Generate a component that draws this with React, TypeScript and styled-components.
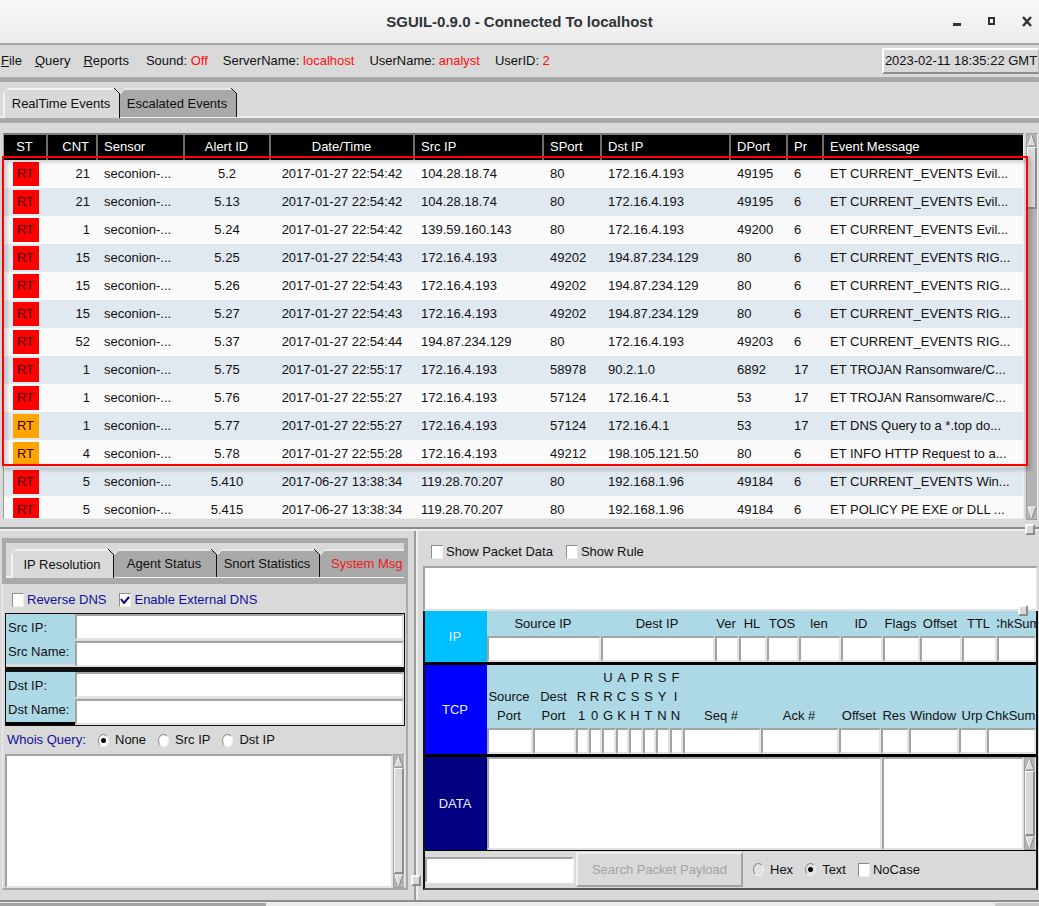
import React from "react";
import styled, { createGlobalStyle, css } from "styled-components";

const face = "#d9d9d9";
const dark = "#a9a9a9";

const sunken = css`
  border: 2px solid;
  border-color: #a3a3a3 #e2e2e2 #e2e2e2 #a3a3a3;
`;
const raised = css`
  border: 2px solid;
  border-color: #fafafa #8c8c8c #8c8c8c #fafafa;
`;

const Global = createGlobalStyle`
  * { box-sizing: border-box; }
  body {
    margin: 0;
    background: ${face};
    color: #111;
    font: 13px/20px "Liberation Sans", Arial, sans-serif;
  }
  button, input, textarea { font: inherit; color: inherit; margin: 0; border-radius: 0; }
`;

const Page = styled.div`
  display: flex;
  flex-direction: column;
  min-height: 100vh;
  overflow: hidden;
`;

/* Window title bar */
const TitleBar = styled.header`
  display: grid;
  grid-template-columns: 1fr auto 1fr;
  align-items: center;
  height: 45px;
  background: linear-gradient(#f7f7f7, #ececec);
  border-bottom: 2px solid #a8a8a8;
`;
const Title = styled.h1`
  grid-column: 2;
  margin: 0;
  font-size: 15px;
  font-weight: bold;
  color: #2e3436;
`;
const WindowButtons = styled.div`
  display: flex;
  justify-content: flex-end;
  gap: 19px;
  padding-right: 4px;
`;
const WindowButton = styled.button`
  width: 16px;
  height: 16px;
  padding: 0;
  border: 0;
  background: none;
  svg { display: block; }
`;

/* Menu */
const MenuBar = styled.nav`
  display: flex;
  align-items: center;
  height: 37px;
  padding-left: 1px;
  border-bottom: 5px solid ${dark};
`;
const MenuItem = styled.button`
  padding: 0;
  margin-right: 13px;
  border: 0;
  background: none;
  &::first-letter { text-decoration: underline; }
`;
const Status = styled.div`
  display: flex;
  flex: 1;
  gap: 15px;
  padding-left: 4px;
`;
const Value = styled.span`
  color: #ff1010;
`;
const Clock = styled.time`
  width: 157px;
  padding: 1px 0;
  border: 2px solid;
  border-color: #fff #b5b5b5 #8c8c8c #fff;
  border-right-width: 1px;
  text-align: center;
  white-space: nowrap;
`;

/* Tabs */
const TabStrip = styled.div<{ $inset?: boolean }>`
  display: flex;
  flex: none;
  height: ${(p) => (p.$inset ? 35 : 36)}px;
  padding: 6px 0 0 ${(p) => (p.$inset ? 5 : 3)}px;
  overflow: hidden;
  background: linear-gradient(#eee, #eee) bottom / 100% 2px no-repeat ${face};
`;
const Tab = styled.button<{ $active?: boolean; $alert?: boolean; $wide?: boolean }>`
  position: relative;
  flex: none;
  width: ${(p) => (p.$wide ? 117 : 103)}px;
  margin-bottom: ${(p) => (p.$active ? 0 : 1)}px;
  padding: 0 2px 0 ${(p) => (p.$alert ? 11 : 0)}px;
  border: 0;
  border-top: 2px solid ${(p) => (p.$active ? "#f2f2f2" : "#e6e6e6")};
  border-left: ${(p) => (p.$active ? "2px solid #f2f2f2" : "0")};
  border-right: 1px solid #111;
  background: ${(p) => (p.$active ? face : dark)};
  color: ${(p) => (p.$alert ? "#f01818" : "inherit")};
  text-align: ${(p) => (p.$alert ? "left" : "center")};
  white-space: nowrap;
  &::before, &::after {
    content: "";
    position: absolute;
    top: -2px;
    width: 6px;
    height: 6px;
  }
  &::before {
    left: ${(p) => (p.$active ? -2 : 0)}px;
    background: linear-gradient(to top left, transparent 44%, #f2f2f2 44% 56%, ${face} 56%);
  }
  &::after {
    right: -1px;
    background: linear-gradient(to top right, transparent 42%, #111 42% 56%, ${face} 56%);
  }
`;

/* Scroll bar */
const Track = styled.div`
  display: flex;
  flex-direction: column;
  flex: none;
  width: 12px;
  background: #b3b3b3;
  border: 1px solid #a0a0a0;
  border-right-color: #eee;
`;
const ArrowButton = styled.button`
  height: 13px;
  padding: 0;
  border: 0;
  background: #b3b3b3;
  svg { display: block; width: 100%; height: 100%; }
`;
const Thumb = styled.div`
  ${raised}
  border-width: 1px 2px 2px 1px;
  background: ${face};
`;
const Trough = styled.div<{ $thumb: string }>`
  flex: 1;
  ${Thumb} { height: ${(p) => p.$thumb}; }
`;
function ScrollBar({ thumb = "100%" }: { thumb?: string }) {
  return (
    <Track>
      <ArrowButton aria-label="Scroll up">
        <svg viewBox="0 0 10 13" preserveAspectRatio="none">
          <path d="M5 1 L1 12 H9 Z" fill={face} />
          <path d="M5 1 L1 12" stroke="#fafafa" fill="none" />
          <path d="M5 1 L9 12 H1" stroke="#868686" fill="none" />
        </svg>
      </ArrowButton>
      <Trough $thumb={thumb}>
        <Thumb />
      </Trough>
      <ArrowButton aria-label="Scroll down">
        <svg viewBox="0 0 10 13" preserveAspectRatio="none">
          <path d="M1 1 H9 L5 12 Z" fill={face} />
          <path d="M9 1 H1 L5 12" stroke="#fafafa" fill="none" />
          <path d="M9 1 L5 12" stroke="#868686" fill="none" />
        </svg>
      </ArrowButton>
    </Track>
  );
}

/* Event table */
const EventPane = styled.section`
  position: relative;
  display: flex;
  flex: none;
  gap: 2px;
  height: 402px;
  padding: 10px 1px 0 3px;
  border-top: 5px solid ${dark};
`;
const EventList = styled.div`
  flex: 1;
  min-width: 0;
  overflow: hidden;
  margin-bottom: 1px;
  border: 1px solid #9a9a9a;
  border-top: 2px solid #7d7d7d;
  border-right-color: #eee;
  border-bottom-color: #eee;
`;
const EventTable = styled.table`
  width: 100%;
  border-collapse: collapse;
  table-layout: fixed;
  white-space: nowrap;
  th {
    height: 25px;
    padding: 0 7px 1px 6px;
    background: #000;
    color: #fff;
    font-weight: normal;
  }
  th + th { border-left: 2px solid #6e6e6e; }
  td { height: 28px; padding: 0 7px; overflow: hidden; }
  tr { background: #fafafa; }
  tbody tr:nth-child(even) { background: #e0e8f0; }
`;
const Cell = styled.td<{ $align: string }>`
  text-align: ${(p) => p.$align};
`;
const HeadCell = styled.th<{ $align: string }>`
  text-align: ${(p) => p.$align};
`;
const Badge = styled.span<{ $level: string }>`
  display: block;
  width: 26px;
  margin: 0 auto;
  line-height: 24px;
  text-align: center;
  background: ${(p) => (p.$level === "high" ? "#f00" : "#ffa500")};
  color: #400000;
`;
const Highlight = styled.div`
  position: absolute;
  top: 33px;
  left: 2px;
  right: 11px;
  height: 310px;
  border: 2px solid #f00;
  filter: drop-shadow(2px 3px 2px rgba(0, 0, 0, 0.4));
  pointer-events: none;
`;

/* Split panes */
const Grip = styled.span`
  ${raised}
  position: absolute;
  width: 10px;
  height: 11px;
  background: ${face};
`;
const RowSash = styled.div`
  position: relative;
  flex: none;
  height: 4px;
  margin-top: 7px;
  border-top: 2px solid #8c8c8c;
  border-bottom: 2px solid #eee;
  ${Grip} { right: 4px; top: -5px; }
`;
const ColumnSash = styled.div`
  position: relative;
  flex: none;
  width: 4px;
  margin: 0 5px;
  border-left: 2px solid #9a9a9a;
  border-right: 2px solid #eee;
  ${Grip} { left: -5px; bottom: 14px; }
`;
const Split = styled.div`
  display: flex;
  flex: 1;
`;

/* Form parts */
const Check = styled.input.attrs({ type: "checkbox" })`
  appearance: none;
  width: 12px;
  height: 14px;
  border: 1px solid #eee;
  border-top-color: #8c8c8c;
  border-left-color: #8c8c8c;
  background: #fff;
  &:checked {
    background: #fff
      url("data:image/svg+xml,%3Csvg xmlns='http://www.w3.org/2000/svg' viewBox='0 0 10 12'%3E%3Cpath d='M1 5 4 9 9 3' fill='none' stroke='%23000080' stroke-width='2'/%3E%3C/svg%3E");
  }
`;
const Radio = styled.input.attrs({ type: "radio" })<{ $flat?: boolean }>`
  appearance: none;
  width: 11px;
  height: 13px;
  margin-right: 3px !important;
  border: 1px solid #f4f4f4;
  border-top-color: #8c8c8c;
  border-left-color: #8c8c8c;
  border-radius: 50% !important;
  background: ${(p) => (p.$flat ? "#e2e2e2" : "#fff")};
  &:checked {
    background: radial-gradient(circle, #000 2px, ${(p) => (p.$flat ? "#e2e2e2" : "#fff")} 3px);
  }
`;
const Option = styled.label<{ $blue?: boolean }>`
  display: flex;
  align-items: center;
  gap: 3px;
  color: ${(p) => (p.$blue ? "#10109a" : "inherit")};
  white-space: nowrap;
`;
const Field = styled.input`
  ${sunken}
  display: block;
  width: 100%;
  min-width: 0;
  height: 26px;
  padding: 0 2px;
  background: #fff;
`;
const Area = styled.textarea`
  ${sunken}
  display: block;
  flex: 1;
  min-width: 0;
  min-height: 0;
  padding: 2px;
  background: #fff;
  resize: none;
`;
const PayloadText = styled(Area)`
  flex: 0 0 142px;
`;
const Row = styled.div`
  display: flex;
  flex: 1;
  min-height: 90px;
`;

/* Left pane */
const LeftPane = styled.section`
  display: flex;
  flex-direction: column;
  width: 409px;
  padding: 7px 1px 10px 2px;
`;
const TabFrame = styled.div`
  border: solid ${dark};
  border-width: 5px 4px 6px;
`;
const Resolution = styled.div`
  display: flex;
  flex: 1;
  flex-direction: column;
  padding: 0 1px 0 2px;
  border-right: 2px solid ${dark};
  border-bottom: 2px solid ${dark};
  border-left: 1px solid #eee;
`;
const DnsOptions = styled.div`
  display: flex;
  align-items: center;
  gap: 13px;
  height: 29px;
  padding: 3px 0 0 7px;
`;
const HostBox = styled.div`
  display: grid;
  grid-template-columns: 69px 1fr;
  border: 1px solid #111;
  & + & { border-top-width: 4px; }
`;
const HostLabels = styled.div<{ $edge: string }>`
  display: flex;
  flex-direction: column;
  padding-top: 2px;
  border-bottom: 3px solid ${(p) => p.$edge};
  background: lightblue;
  label { padding: 2px; line-height: 20px; }
`;
const HostFields = styled.div`
  display: grid;
  gap: 1px;
`;
const WhoisOptions = styled.div`
  display: flex;
  align-items: center;
  gap: 12px;
  height: 28px;
  padding: 0 2px;
`;
const WhoisTitle = styled.span`
  width: 79px;
  color: #10109a;
`;

/* Right pane */
const RightPane = styled.section`
  display: flex;
  flex: 1;
  flex-direction: column;
  min-width: 0;
  padding: 5px 1px 10px 0;
`;
const PacketOptions = styled.div`
  display: flex;
  gap: 13px;
  padding: 6px 8px 4px;
`;
const RuleBox = styled.div`
  position: relative;
  display: flex;
  height: 45px;
  ${Grip} { right: 10px; bottom: -5px; }
`;
const PacketFrame = styled.div`
  display: flex;
  flex: 1;
  flex-direction: column;
  border: solid #111;
  border-width: 0 2px 2px;
  border-bottom-color: #555;
`;
const Layer = styled.div<{ $grow?: boolean }>`
  display: grid;
  grid-template-columns: 62px 1fr;
  flex: ${(p) => (p.$grow ? 1 : "none")};
  border-bottom: ${(p) => (p.$grow ? 1 : 3)}px solid #000;
`;
const LayerName = styled.div<{ $color: string }>`
  display: flex;
  align-items: center;
  justify-content: center;
  padding-right: 2px;
  background: ${(p) => p.$color};
  color: #e8eeff;
`;
const Columns = styled.div<{ $cols: string }>`
  display: grid;
  grid-template-columns: ${(p) => p.$cols};
  min-width: 0;
  background: lightblue;
`;
const Column = styled.label<{ $tall?: boolean }>`
  display: flex;
  flex-direction: column;
  min-width: 0;
  height: ${(p) => (p.$tall ? 89 : 51)}px;
`;
const ColumnName = styled.span<{ $tall?: boolean }>`
  display: flex;
  flex: 1;
  flex-direction: column;
  align-items: center;
  justify-content: flex-end;
  overflow: ${(p) => (p.$tall ? "visible" : "hidden")};
  padding: 0 2px 3px 0;
  line-height: 19px;
  white-space: pre;
  text-align: center;
`;
const SearchRow = styled.div`
  display: flex;
  align-items: center;
  height: 37px;
`;
const SearchField = styled(Field)`
  width: 149px;
  margin-right: 2px;
  border-color: #a3a3a3 #fafafa #fafafa #a3a3a3;
`;
const SearchButton = styled.button`
  ${raised}
  border-color: #eee #a3a3a3 #a3a3a3 #eee;
  width: 167px;
  height: 35px;
  margin-right: 10px;
  padding: 0;
  background: ${face};
  color: #a3a3a3 !important;
`;
const SearchOptions = styled.div`
  display: flex;
  gap: 12px;
`;

const BottomScroll = styled.footer`
  display: flex;
  justify-content: space-between;
  height: 6px;
  padding-top: 1px;
  border-top: 2px solid #8c8c8c;
  background: #ececec;
`;
const BottomThumb = styled.div<{ $width: number; $pale?: boolean }>`
  width: ${(p) => p.$width}px;
  background: ${(p) => (p.$pale ? "#c8c8c8" : "#a3a3a3")};
`;

const columns: [string, string, number | undefined][] = [
  ["ST", "center", 43],
  ["CNT", "right", 50],
  ["Sensor", "left", 87],
  ["Alert ID", "center", 86],
  ["Date/Time", "center", 144],
  ["Src IP", "left", 129],
  ["SPort", "left", 58],
  ["Dst IP", "left", 129],
  ["DPort", "left", 57],
  ["Pr", "left", 36],
  ["Event Message", "left", undefined],
];

const S = "seconion-...";
const events: string[][] = [
  ["high", "21", S, "5.2", "2017-01-27 22:54:42", "104.28.18.74", "80", "172.16.4.193", "49195", "6", "ET CURRENT_EVENTS Evil..."],
  ["high", "21", S, "5.13", "2017-01-27 22:54:42", "104.28.18.74", "80", "172.16.4.193", "49195", "6", "ET CURRENT_EVENTS Evil..."],
  ["high", "1", S, "5.24", "2017-01-27 22:54:42", "139.59.160.143", "80", "172.16.4.193", "49200", "6", "ET CURRENT_EVENTS Evil..."],
  ["high", "15", S, "5.25", "2017-01-27 22:54:43", "172.16.4.193", "49202", "194.87.234.129", "80", "6", "ET CURRENT_EVENTS RIG..."],
  ["high", "15", S, "5.26", "2017-01-27 22:54:43", "172.16.4.193", "49202", "194.87.234.129", "80", "6", "ET CURRENT_EVENTS RIG..."],
  ["high", "15", S, "5.27", "2017-01-27 22:54:43", "172.16.4.193", "49202", "194.87.234.129", "80", "6", "ET CURRENT_EVENTS RIG..."],
  ["high", "52", S, "5.37", "2017-01-27 22:54:44", "194.87.234.129", "80", "172.16.4.193", "49203", "6", "ET CURRENT_EVENTS RIG..."],
  ["high", "1", S, "5.75", "2017-01-27 22:55:17", "172.16.4.193", "58978", "90.2.1.0", "6892", "17", "ET TROJAN Ransomware/C..."],
  ["high", "1", S, "5.76", "2017-01-27 22:55:27", "172.16.4.193", "57124", "172.16.4.1", "53", "17", "ET TROJAN Ransomware/C..."],
  ["low", "1", S, "5.77", "2017-01-27 22:55:27", "172.16.4.193", "57124", "172.16.4.1", "53", "17", "ET DNS Query to a *.top do..."],
  ["low", "4", S, "5.78", "2017-01-27 22:55:28", "172.16.4.193", "49212", "198.105.121.50", "80", "6", "ET INFO HTTP Request to a..."],
  ["high", "5", S, "5.410", "2017-06-27 13:38:34", "119.28.70.207", "80", "192.168.1.96", "49184", "6", "ET CURRENT_EVENTS Win..."],
  ["high", "5", S, "5.415", "2017-06-27 13:38:34", "119.28.70.207", "80", "192.168.1.96", "49184", "6", "ET POLICY PE EXE or DLL ..."],
];

const ipFields = ["Source IP", "Dest IP", "Ver", "HL", "TOS", "len", "ID", "Flags", "Offset", "TTL", "ChkSum"];
const ipCols = "114px 114px 24px 28px 32px 42px 42px 37px 42px 35px minmax(0, 1fr)";
const tcpFields = [
  "Source\nPort", "Dest\nPort", "R\n1", "R\n0", "U\nR\nG", "A\nC\nK", "P\nS\nH", "R\nS\nT", "S\nY\nN", "F\nI\nN",
  "Seq #", "Ack #", "Offset", "Res", "Window", "Urp", "ChkSum",
];
const tcpCols = "46px 43px 13px 13px 14px 13px 14px 13px 14px 13px 78px 78px 42px 28px 50px 28px minmax(0, 1fr)";

function Host({ name, edge }: { name: string; edge: string }) {
  const id = name.toLowerCase();
  return (
    <HostBox>
      <HostLabels $edge={edge}>
        <label htmlFor={`${id}-ip`}>{name} IP:</label>
        <label htmlFor={`${id}-name`}>{name} Name:</label>
      </HostLabels>
      <HostFields>
        <Field id={`${id}-ip`} />
        <Field id={`${id}-name`} />
      </HostFields>
    </HostBox>
  );
}

function HeaderFields({ names, cols, tall }: { names: string[]; cols: string; tall?: boolean }) {
  return (
    <Columns $cols={cols}>
      {names.map((n) => (
        <Column key={n} $tall={tall}>
          <ColumnName $tall={tall}>{n}</ColumnName>
          <Field readOnly />
        </Column>
      ))}
    </Columns>
  );
}

export default function App() {
  return (
    <Page>
      <Global />
      <TitleBar>
        <Title>SGUIL-0.9.0 - Connected To localhost</Title>
        <WindowButtons>
          <WindowButton aria-label="Minimize">
            <svg width="16" height="16"><path d="M4 10.500H12" stroke="#2e3436" strokeWidth="3" /></svg>
          </WindowButton>
          <WindowButton aria-label="Maximize">
            <svg width="16" height="16"><rect x="5" y="4" width="5" height="6" fill="none" stroke="#2e3436" strokeWidth="2" /></svg>
          </WindowButton>
          <WindowButton aria-label="Close">
            <svg width="16" height="16"><path d="M4 3L12 12M12 3L4 12" stroke="#2e3436" strokeWidth="2.400" /></svg>
          </WindowButton>
        </WindowButtons>
      </TitleBar>

      <MenuBar>
        <MenuItem>File</MenuItem>
        <MenuItem>Query</MenuItem>
        <MenuItem>Reports</MenuItem>
        <Status>
          <span>Sound: <Value>Off</Value></span>
          <span>ServerName: <Value>localhost</Value></span>
          <span>UserName: <Value>analyst</Value></span>
          <span>UserID: <Value>2</Value></span>
        </Status>
        <Clock>2023-02-11 18:35:22 GMT</Clock>
      </MenuBar>

      <TabStrip>
        <Tab $active $wide>RealTime Events</Tab>
        <Tab $wide>Escalated Events</Tab>
      </TabStrip>

      <EventPane>
        <EventList>
          <EventTable>
            <colgroup>
              {columns.map(([name, , width]) => <col key={name} width={width} />)}
            </colgroup>
            <thead>
              <tr>
                {columns.map(([name, align]) => <HeadCell key={name} $align={align}>{name}</HeadCell>)}
              </tr>
            </thead>
            <tbody>
              {events.map((row) => (
                <tr key={row[3]}>
                  {row.map((value, i) => (
                    <Cell key={i} $align={columns[i][1]}>
                      {i === 0 ? <Badge $level={value}>RT</Badge> : value}
                    </Cell>
                  ))}
                </tr>
              ))}
            </tbody>
          </EventTable>
        </EventList>
        <ScrollBar thumb="62px" />
        <Highlight />
      </EventPane>

      <RowSash><Grip /></RowSash>

      <Split>
        <LeftPane>
          <TabFrame>
            <TabStrip $inset>
              <Tab $active>IP Resolution</Tab>
              <Tab>Agent Status</Tab>
              <Tab>Snort Statistics</Tab>
              <Tab $alert>System Msg</Tab>
            </TabStrip>
          </TabFrame>
          <Resolution>
            <DnsOptions>
              <Option $blue><Check />Reverse DNS</Option>
              <Option $blue><Check defaultChecked />Enable External DNS</Option>
            </DnsOptions>
            <Host name="Src" edge={face} />
            <Host name="Dst" edge="#000" />
            <WhoisOptions role="radiogroup" aria-labelledby="whois-title">
              <WhoisTitle id="whois-title">Whois Query:</WhoisTitle>
              <Option><Radio name="whois" defaultChecked />None</Option>
              <Option><Radio name="whois" />Src IP</Option>
              <Option><Radio name="whois" />Dst IP</Option>
            </WhoisOptions>
            <Row>
              <Area aria-label="Whois result" />
              <ScrollBar />
            </Row>
          </Resolution>
        </LeftPane>

        <ColumnSash><Grip /></ColumnSash>

        <RightPane>
          <PacketOptions>
            <Option><Check />Show Packet Data</Option>
            <Option><Check />Show Rule</Option>
          </PacketOptions>
          <RuleBox>
            <Area aria-label="Rule" />
            <Grip />
          </RuleBox>
          <PacketFrame>
            <Layer>
              <LayerName $color="#00bfff">IP</LayerName>
              <HeaderFields names={ipFields} cols={ipCols} />
            </Layer>
            <Layer>
              <LayerName $color="#0000ff">TCP</LayerName>
              <HeaderFields names={tcpFields} cols={tcpCols} tall />
            </Layer>
            <Layer $grow>
              <LayerName $color="#000080">DATA</LayerName>
              <Row>
                <Area aria-label="Payload in hex" />
                <PayloadText aria-label="Payload as text" />
                <ScrollBar />
              </Row>
            </Layer>
            <SearchRow>
              <SearchField aria-label="Search text" />
              <SearchButton disabled>Search Packet Payload</SearchButton>
              <SearchOptions>
                <Option><Radio name="format" $flat />Hex</Option>
                <Option><Radio name="format" $flat defaultChecked />Text</Option>
                <Option><Check />NoCase</Option>
              </SearchOptions>
            </SearchRow>
          </PacketFrame>
        </RightPane>
      </Split>

      <BottomScroll>
        <BottomThumb $width={266} />
        <BottomThumb $width={44} $pale />
      </BottomScroll>
    </Page>
  );
}
